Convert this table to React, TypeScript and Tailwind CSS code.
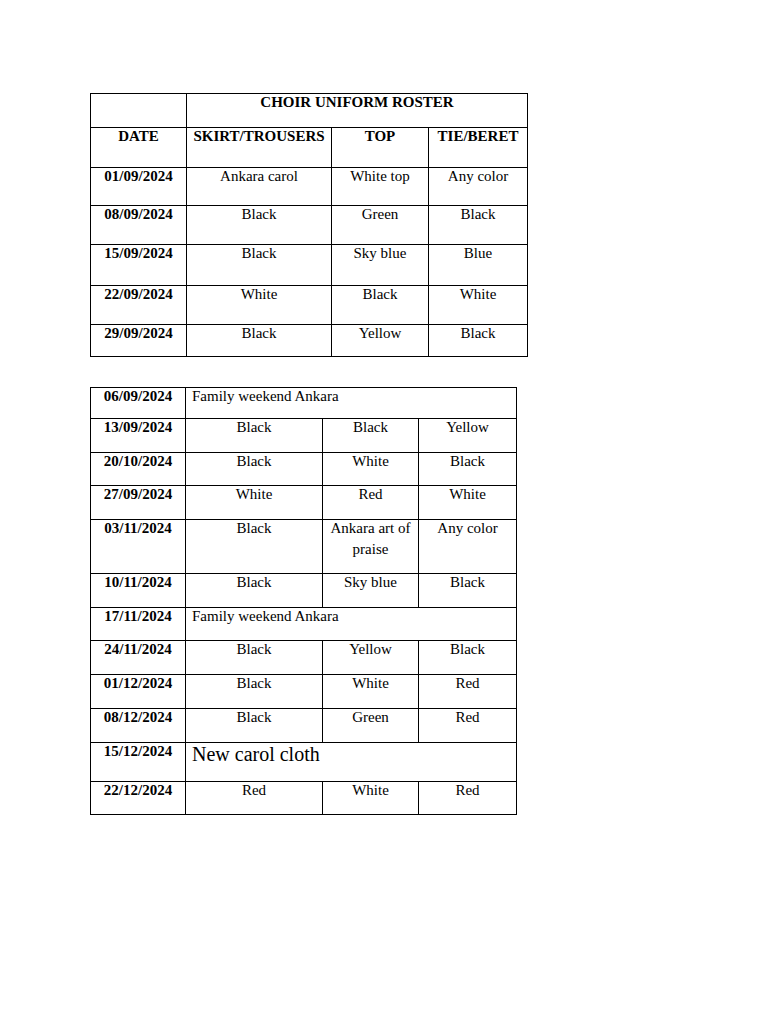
import React from 'react';

type Row = { h: number; date: string; cells?: [string, string, string]; note?: string; big?: boolean };

const rosterA: Row[] = [
  { h: 38, date: '01/09/2024', cells: ['Ankara carol', 'White top', 'Any color'] },
  { h: 39, date: '08/09/2024', cells: ['Black', 'Green', 'Black'] },
  { h: 41, date: '15/09/2024', cells: ['Black', 'Sky blue', 'Blue'] },
  { h: 39, date: '22/09/2024', cells: ['White', 'Black', 'White'] },
  { h: 32, date: '29/09/2024', cells: ['Black', 'Yellow', 'Black'] },
];

const rosterB: Row[] = [
  { h: 31, date: '06/09/2024', note: 'Family weekend Ankara' },
  { h: 34, date: '13/09/2024', cells: ['Black', 'Black', 'Yellow'] },
  { h: 33, date: '20/10/2024', cells: ['Black', 'White', 'Black'] },
  { h: 34, date: '27/09/2024', cells: ['White', 'Red', 'White'] },
  { h: 54, date: '03/11/2024', cells: ['Black', 'Ankara art of praise', 'Any color'] },
  { h: 34, date: '10/11/2024', cells: ['Black', 'Sky blue', 'Black'] },
  { h: 33, date: '17/11/2024', note: 'Family weekend Ankara' },
  { h: 34, date: '24/11/2024', cells: ['Black', 'Yellow', 'Black'] },
  { h: 34, date: '01/12/2024', cells: ['Black', 'White', 'Red'] },
  { h: 34, date: '08/12/2024', cells: ['Black', 'Green', 'Red'] },
  { h: 39, date: '15/12/2024', note: 'New carol cloth', big: true },
  { h: 33, date: '22/12/2024', cells: ['Red', 'White', 'Red'] },
];

const cell = 'border border-black align-top pt-0 px-[4px]';

function Rows({ rows }: { rows: Row[] }) {
  return (
    <>
      {rows.map((r) => (
        <tr key={r.date} style={{ height: r.h }}>
          <td className={`${cell} text-center font-bold`}>{r.date}</td>
          {r.note ? (
            <td colSpan={3} className={`${cell} text-left pl-[6px] ${r.big ? 'text-[20px] leading-[22px]' : ''}`}>
              {r.note}
            </td>
          ) : (
            r.cells!.map((c, i) => (
              <td key={i} className={`${cell} text-center`}>
                {c.length > 14 ? <div className="leading-[21px] -mt-[2px]">{c}</div> : c}
              </td>
            ))
          )}
        </tr>
      ))}
    </>
  );
}

export default function App() {
  return (
    <div
      className="min-h-[1024px] w-[768px] bg-white text-black text-[15px] leading-[17px] pt-[93px] pl-[90px]"
      style={{ fontFamily: '"Liberation Serif", "Times New Roman", serif' }}
    >
      <table className="border-collapse table-fixed w-[438px]">
        <colgroup>
          <col className="w-[96px]" />
          <col className="w-[145px]" />
          <col className="w-[97px]" />
          <col className="w-[99px]" />
        </colgroup>
        <tbody>
          <tr className="h-[34px]">
            <td className={cell}></td>
            <td colSpan={3} className={`${cell} text-center font-bold`}>
              CHOIR UNIFORM ROSTER
            </td>
          </tr>
          <tr className="h-[40px]">
            <td className={`${cell} text-center font-bold`}>DATE</td>
            <td className={`${cell} text-center font-bold`}>SKIRT/TROUSERS</td>
            <td className={`${cell} text-center font-bold`}>TOP</td>
            <td className={`${cell} text-center font-bold`}>TIE/BERET</td>
          </tr>
          <Rows rows={rosterA} />
        </tbody>
      </table>

      <table className="border-collapse table-fixed w-[427px] mt-[30px]">
        <colgroup>
          <col className="w-[95px]" />
          <col className="w-[137px]" />
          <col className="w-[96px]" />
          <col className="w-[98px]" />
        </colgroup>
        <tbody>
          <Rows rows={rosterB} />
        </tbody>
      </table>
    </div>
  );
}
